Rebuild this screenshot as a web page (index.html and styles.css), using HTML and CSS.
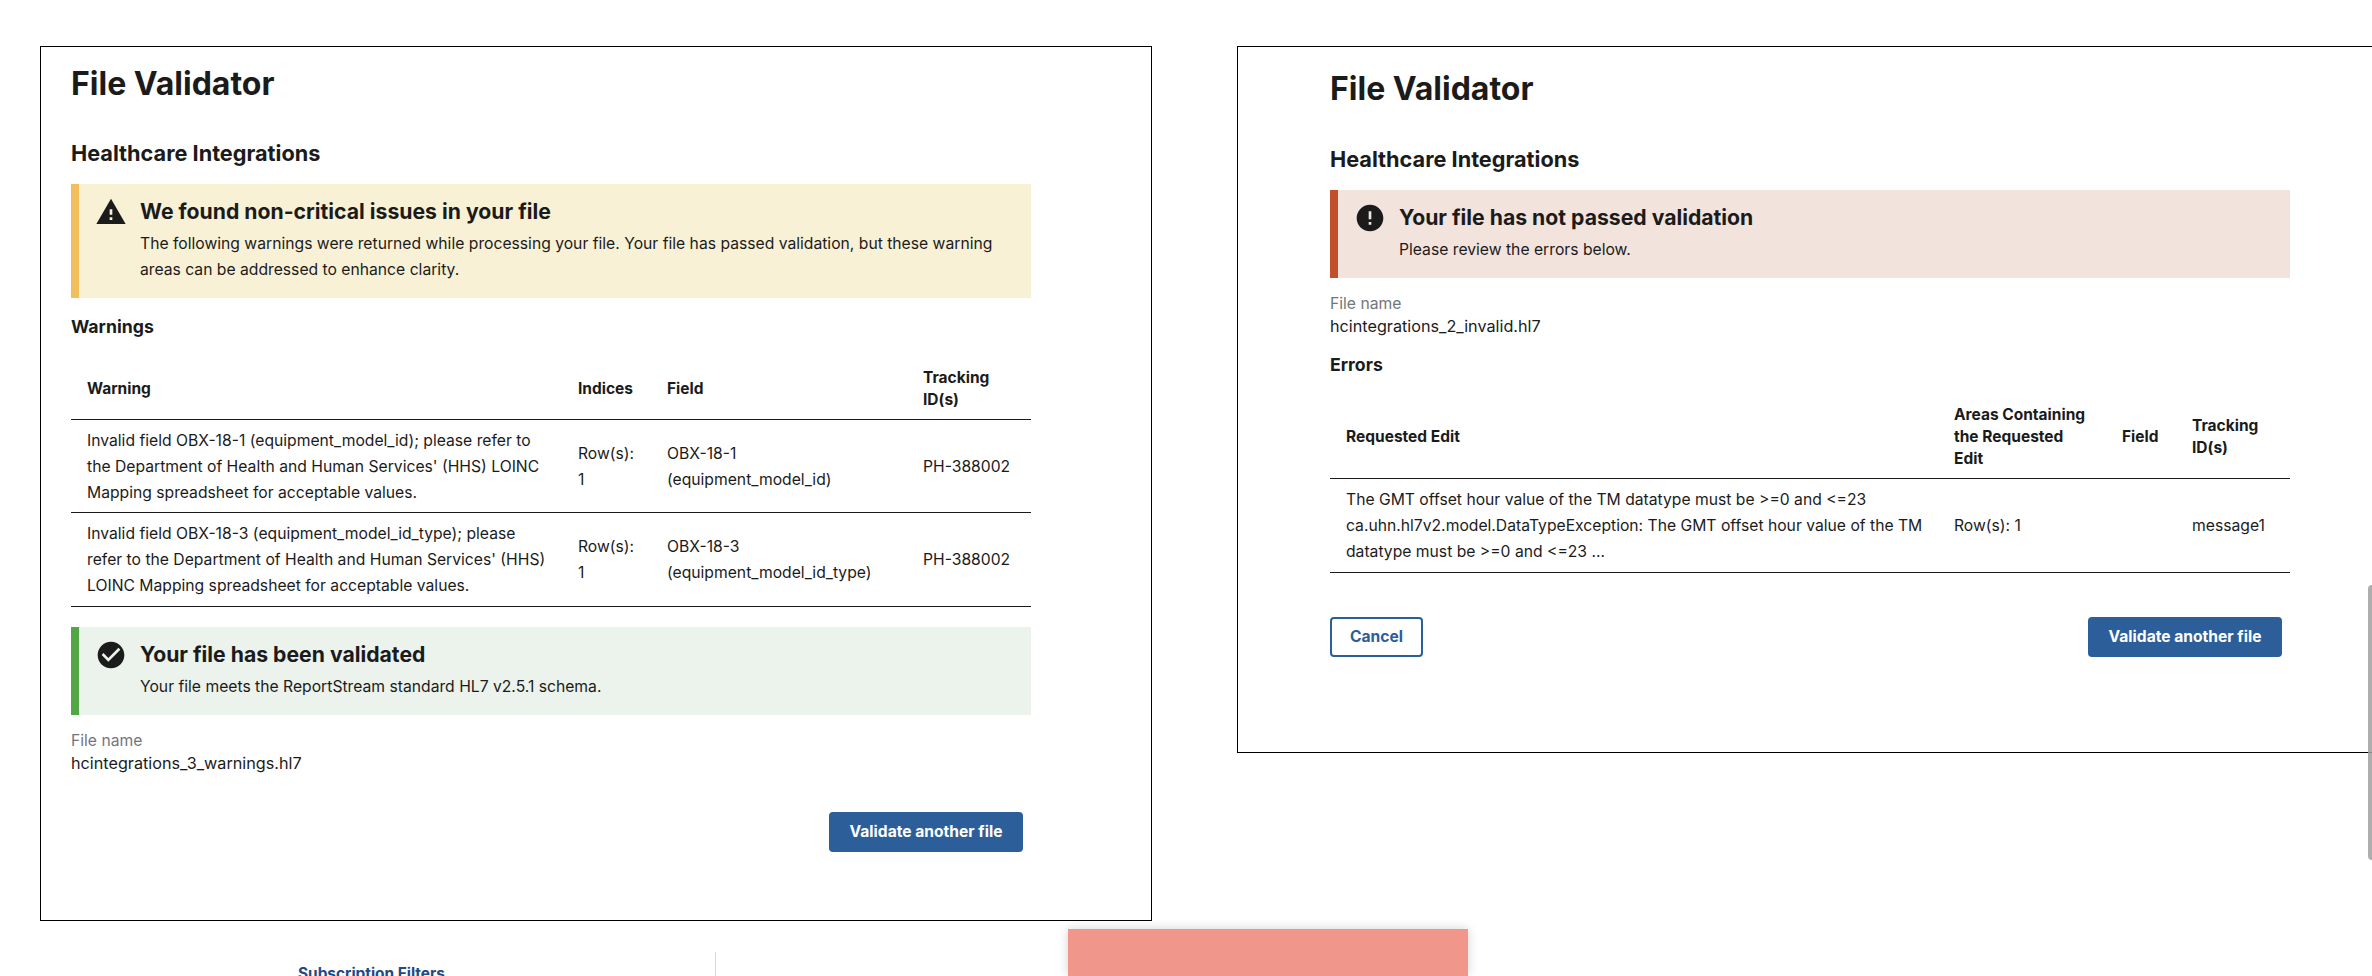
FILE: index.html
```html
<!DOCTYPE html>
<html lang="en">
<head>
<meta charset="utf-8">
<title>File Validator</title>
<link rel="stylesheet" href="styles.css">
</head>
<body>
<section class="frame frame-left">
  <h1 class="title">File Validator</h1>
  <h2 class="subtitle">Healthcare Integrations</h2>
  <div class="alert alert-warning">
    <svg class="alert-icon" viewBox="0 0 24 24"><path d="M1 21h22L12 2 1 21zm12-3h-2v-2h2v2zm0-4h-2v-4h2v4z"/></svg>
    <div>
      <h3 class="alert-heading">We found non-critical issues in your file</h3>
      <p class="alert-text">The following warnings were returned while processing your file. Your file has passed validation, but these warning areas can be addressed to enhance clarity.</p>
    </div>
  </div>
  <h4 class="table-title warnings-title">Warnings</h4>
  <table class="grid grid-warnings">
    <colgroup><col class="w-a"><col class="w-b"><col class="w-c"><col class="w-d"></colgroup>
    <thead><tr><th>Warning</th><th>Indices</th><th>Field</th><th>Tracking ID(s)</th></tr></thead>
    <tbody>
      <tr><td>Invalid field OBX-18-1 (equipment_model_id); please refer to the Department of Health and Human Services' (HHS) LOINC Mapping spreadsheet for acceptable values.</td><td>Row(s): 1</td><td>OBX-18-1 (equipment_model_id)</td><td>PH-388002</td></tr>
      <tr><td>Invalid field OBX-18-3 (equipment_model_id_type); please refer to the Department of Health and Human Services' (HHS) LOINC Mapping spreadsheet for acceptable values.</td><td>Row(s): 1</td><td>OBX-18-3 (equipment_model_id_type)</td><td>PH-388002</td></tr>
    </tbody>
  </table>
  <div class="alert alert-success">
    <svg class="alert-icon" viewBox="0 0 24 24"><path d="M12 2C6.48 2 2 6.48 2 12s4.48 10 10 10 10-4.48 10-10S17.52 2 12 2zm-2 15l-5-5 1.41-1.41L10 14.17l7.59-7.59L19 8l-9 9z"/></svg>
    <div>
      <h3 class="alert-heading">Your file has been validated</h3>
      <p class="alert-text">Your file meets the ReportStream standard HL7 v2.5.1 schema.</p>
    </div>
  </div>
  <div class="file-block">
    <div class="file-label">File name</div>
    <div class="file-name">hcintegrations_3_warnings.hl7</div>
  </div>
  <div class="actions actions-left">
    <button class="btn btn-primary" type="button">Validate another file</button>
  </div>
</section>

<section class="frame frame-right">
  <h1 class="title">File Validator</h1>
  <h2 class="subtitle">Healthcare Integrations</h2>
  <div class="alert alert-error">
    <svg class="alert-icon" viewBox="0 0 24 24"><path d="M12 2C6.48 2 2 6.48 2 12s4.48 10 10 10 10-4.48 10-10S17.52 2 12 2zm1 15h-2v-2h2v2zm0-4h-2V7h2v6z"/></svg>
    <div>
      <h3 class="alert-heading">Your file has not passed validation</h3>
      <p class="alert-text">Please review the errors below.</p>
    </div>
  </div>
  <div class="file-block file-block-right">
    <div class="file-label">File name</div>
    <div class="file-name">hcintegrations_2_invalid.hl7</div>
  </div>
  <h4 class="table-title errors-title">Errors</h4>
  <table class="grid grid-errors">
    <colgroup><col class="e-a"><col class="e-b"><col class="e-c"><col class="e-d"></colgroup>
    <thead><tr><th>Requested Edit</th><th>Areas Containing the Requested Edit</th><th>Field</th><th>Tracking ID(s)</th></tr></thead>
    <tbody>
      <tr><td>The GMT offset hour value of the TM datatype must be &gt;=0 and &lt;=23 ca.uhn.hl7v2.model.DataTypeException: The GMT offset hour value of the TM datatype must be &gt;=0 and &lt;=23 ...</td><td>Row(s): 1</td><td></td><td>message1</td></tr>
    </tbody>
  </table>
  <div class="actions actions-right">
    <button class="btn btn-outline" type="button">Cancel</button>
    <button class="btn btn-primary" type="button">Validate another file</button>
  </div>
</section>

<div class="fragment-link">Subscription Filters</div>
<div class="fragment-rule"></div>
<div class="fragment-pink"></div>
<div class="scroll-thumb"></div>
</body>
</html>
```
FILE: styles.css
```css
* { box-sizing: border-box; }
html, body { margin: 0; height: 100%; overflow: hidden; }
body {
  position: relative;
  width: 2372px;
  height: 976px;
  background: #fff;
  color: #1b1b1b;
  font-family: Inter, "Liberation Sans", sans-serif;
  font-size: 15.7px;
  font-weight: 430;
  line-height: 26px;
}
.frame { position: absolute; top: 46px; border: 1px solid #000; background: #fff; }
.frame-left { left: 40px; width: 1112px; height: 875px; padding: 13px 0 0 30px; }
.frame-right { left: 1237px; width: 1200px; height: 707px; padding: 18px 0 0 92px; }
.frame-left > * { width: 960px; }
.frame-right > * { width: 960px; }
.title { margin: 0; font-size: 32px; line-height: 48px; font-weight: 700; }
.subtitle { margin: 31px 0 0; font-size: 21.7px; line-height: 28px; font-weight: 700; }
.frame-right .subtitle { margin-top: 32px; }
.alert { display: flex; gap: 13px; padding: 11px 16px 15px 16px; border-left: 8px solid; }
.frame-left .alert-warning { margin-top: 17px; }
.frame-right .alert-error { margin-top: 17px; }
.alert-warning { background: #f8f1d6; border-color: #f2bf5c; }
.alert-success { background: #ecf2ec; border-color: #52a643; margin-top: 20px; }
.alert-error { background: #f2e3dd; border-color: #c14f2c; }
.alert-icon { width: 32px; height: 32px; flex: none; fill: #1b1b1b; margin-top: 1px; }
.alert-heading { margin: 0 0 4px; font-size: 21.2px; line-height: 32px; font-weight: 700; }
.alert-text { margin: 0; }
.table-title { margin: 0; font-size: 17.7px; line-height: 24px; font-weight: 700; }
.warnings-title { margin-top: 17px; }
.errors-title { margin-top: 15px; }
.grid { border-collapse: collapse; table-layout: fixed; }
.grid-warnings { margin-top: 19px; }
.grid-errors { margin-top: 18px; }
.grid th { text-align: left; font-size: 15.5px; font-weight: 700; line-height: 22px; padding: 9px 16px 8px; border-bottom: 1px solid #1b1b1b; }
.grid td { padding: 8px 16px 6px; border-bottom: 1px solid #1b1b1b; }
.grid tr:last-child td { padding-bottom: 7px; }
.grid-errors td:first-child { padding-right: 4px; }
.w-a { width: 491px; } .w-b { width: 89px; } .w-c { width: 256px; } .w-d { width: 124px; }
.e-a { width: 608px; } .e-b { width: 168px; } .e-c { width: 70px; } .e-d { width: 114px; }
.file-block { margin-top: 14px; line-height: 23px; }
.file-name { font-size: 16.2px; }
.file-label { color: #71767a; }
.actions { display: flex; justify-content: space-between; }
.actions-left { justify-content: flex-end; margin-top: 37px; padding-right: 8px; }
.actions-right { margin-top: 44px; padding-right: 8px; }
.btn { height: 40px; border-radius: 4px; font: inherit; font-weight: 700; font-size: 15.6px; cursor: pointer; }
.btn-primary { width: 194px; background: #2c5e9a; color: #fff; border: 0; }
.btn-outline { width: 93px; background: #fff; color: #2c5e9a; border: 2px solid #2c5e9a; }
.fragment-link { position: absolute; left: 298px; top: 961px; font-size: 15.4px; font-weight: 700; color: #1f4a85; }
.fragment-rule { position: absolute; left: 715px; top: 952px; width: 1px; height: 24px; background: #d9d9d9; }
.fragment-pink { position: absolute; left: 1068px; top: 929px; width: 400px; height: 47px; background: #f0968a; box-shadow: 0 0 10px rgba(0,0,0,.18); }
.scroll-thumb { position: absolute; left: 2368px; top: 585px; width: 4px; height: 275px; background: rgba(160,160,160,.85); border-radius: 4px 0 0 4px; }
```
